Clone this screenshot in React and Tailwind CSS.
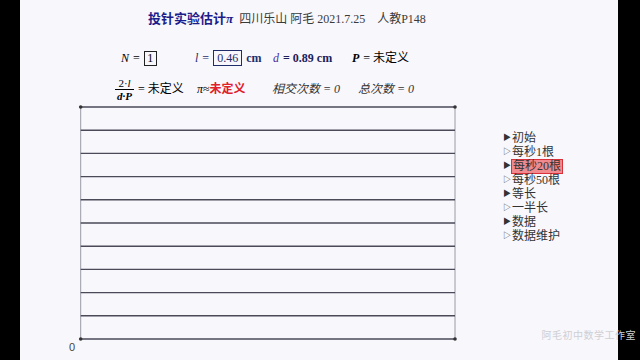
import React from 'react';

const serif = { fontFamily: '"Liberation Serif", "Noto Sans CJK SC", serif' };

const lines = Array.from({ length: 11 }, (_, i) => 6 + i * 23.2);

const menu = [
  { label: '初始', filled: true },
  { label: '每秒1根', filled: false },
  { label: '每秒20根', filled: true, active: true },
  { label: '每秒50根', filled: false },
  { label: '等长', filled: true },
  { label: '一半长', filled: false },
  { label: '数据', filled: true },
  { label: '数据维护', filled: false },
];

const Board = () => (
  <svg width="400" height="255" viewBox="0 0 400 255" className="shrink-0">
    <line x1="14.7" y1="6" x2="14.7" y2="238" stroke="#9a9aa6" strokeWidth="1" />
    <line x1="389" y1="6" x2="389" y2="238" stroke="#9a9aa6" strokeWidth="1" />
    {lines.map((y) => (
      <line key={y} x1="14.7" y1={y} x2="389" y2={y} stroke="#4a4a58" strokeWidth="1.4" />
    ))}
    <circle cx="14.7" cy="6" r="1.8" fill="#333" />
    <circle cx="389" cy="6" r="1.8" fill="#333" />
    <circle cx="14.7" cy="238" r="1.8" fill="#333" />
    <circle cx="389" cy="238" r="1.8" fill="#333" />
    <text x="3" y="250" fontSize="11" fill="#444" fontFamily="Liberation Sans, sans-serif">0</text>
  </svg>
);

export default function App() {
  return (
    <div className="relative flex w-[640px] h-[360px] overflow-hidden bg-black" style={serif}>
      <div className="w-[20px] shrink-0 bg-black" />

      <div className="w-[598px] shrink-0 bg-[#f8f7fc] flex flex-col">
        {/* title */}
        <div className="h-[38px] flex items-center pl-[128px] text-[12px] text-[#3a3a3a] whitespace-nowrap">
          <span className="font-bold text-[13px] text-[#1c1c8a]">投针实验估计<i>π</i></span>
          <span className="ml-[6px]">四川乐山 阿毛 2021.7.25</span>
          <span className="ml-[12px]">人教P148</span>
        </div>

        {/* parameters */}
        <div className="mt-[12px] h-[16px] flex items-center pl-[101px] text-[12px] whitespace-nowrap">
          <div className="w-[74px] flex items-center text-black">
            <i>N</i>
            <span className="mx-[4px]">=</span>
            <span className="border border-[#222] h-[15px] w-[13px] flex items-center justify-center leading-none">1</span>
          </div>
          <div className="w-[78px] flex items-center text-[#1f2d6b]">
            <i>l</i>
            <span className="mx-[4px]">=</span>
            <span className="border border-[#1f2d6b] h-[16px] px-[3px] flex items-center leading-none">0.46</span>
            <span className="ml-[4px] font-bold">cm</span>
          </div>
          <div className="w-[79px] flex items-center">
            <i className="text-[#4a2fa0]">d</i>
            <span className="ml-[4px] font-bold text-[#20205a]">= 0.89 cm</span>
          </div>
          <div className="flex items-center text-black">
            <i className="font-bold">P</i>
            <span className="ml-[4px]">= 未定义</span>
          </div>
        </div>

        <div className="mt-[10px] h-[26px] flex items-center pl-[95px] text-[12px] whitespace-nowrap">
          <div className="w-[82px] flex items-center text-black">
            <div className="flex flex-col items-center text-[11px] leading-[12px]">
              <span>2·<i>l</i></span>
              <span className="w-[19px] h-px bg-black" />
              <span className="font-bold italic">d·P</span>
            </div>
            <span className="ml-[4px]">= 未定义</span>
          </div>
          <div className="w-[75px] flex items-center text-black">
            <i>π</i>
            <span>≈</span>
            <span className="font-bold text-[#e0202a]">未定义</span>
          </div>
          <div className="w-[86px] italic text-[#333]">相交次数 = 0</div>
          <div className="italic text-[#333]">总次数 = 0</div>
        </div>

        {/* board and menu */}
        <div className="flex pl-[46px] -mt-[1px]">
          <Board />
          <div className="ml-[37px] mt-[30px] flex flex-col text-[12px] leading-[14px] text-[#333] whitespace-nowrap">
            {menu.map((m) => (
              <div key={m.label} className="flex items-center h-[14px]">
                <span className="w-[8px] text-[8px] leading-none">{m.filled ? '▶' : '▷'}</span>
                <span
                  className={
                    m.active
                      ? 'px-[1px] bg-[#f08a8e] border border-[#d9303a] leading-[13px]'
                      : 'ml-[1px]'
                  }
                >
                  {m.label}
                </span>
              </div>
            ))}
          </div>
        </div>
      </div>

      <div className="flex-1 bg-black" />

      <div
        className="absolute right-[4px] top-[327px] text-[10px] text-[#cfcfd4] tracking-[0.5px]"
        style={{ fontFamily: '"Noto Sans CJK SC", sans-serif' }}
      >
        阿毛初中数学工作室
      </div>
    </div>
  );
}
